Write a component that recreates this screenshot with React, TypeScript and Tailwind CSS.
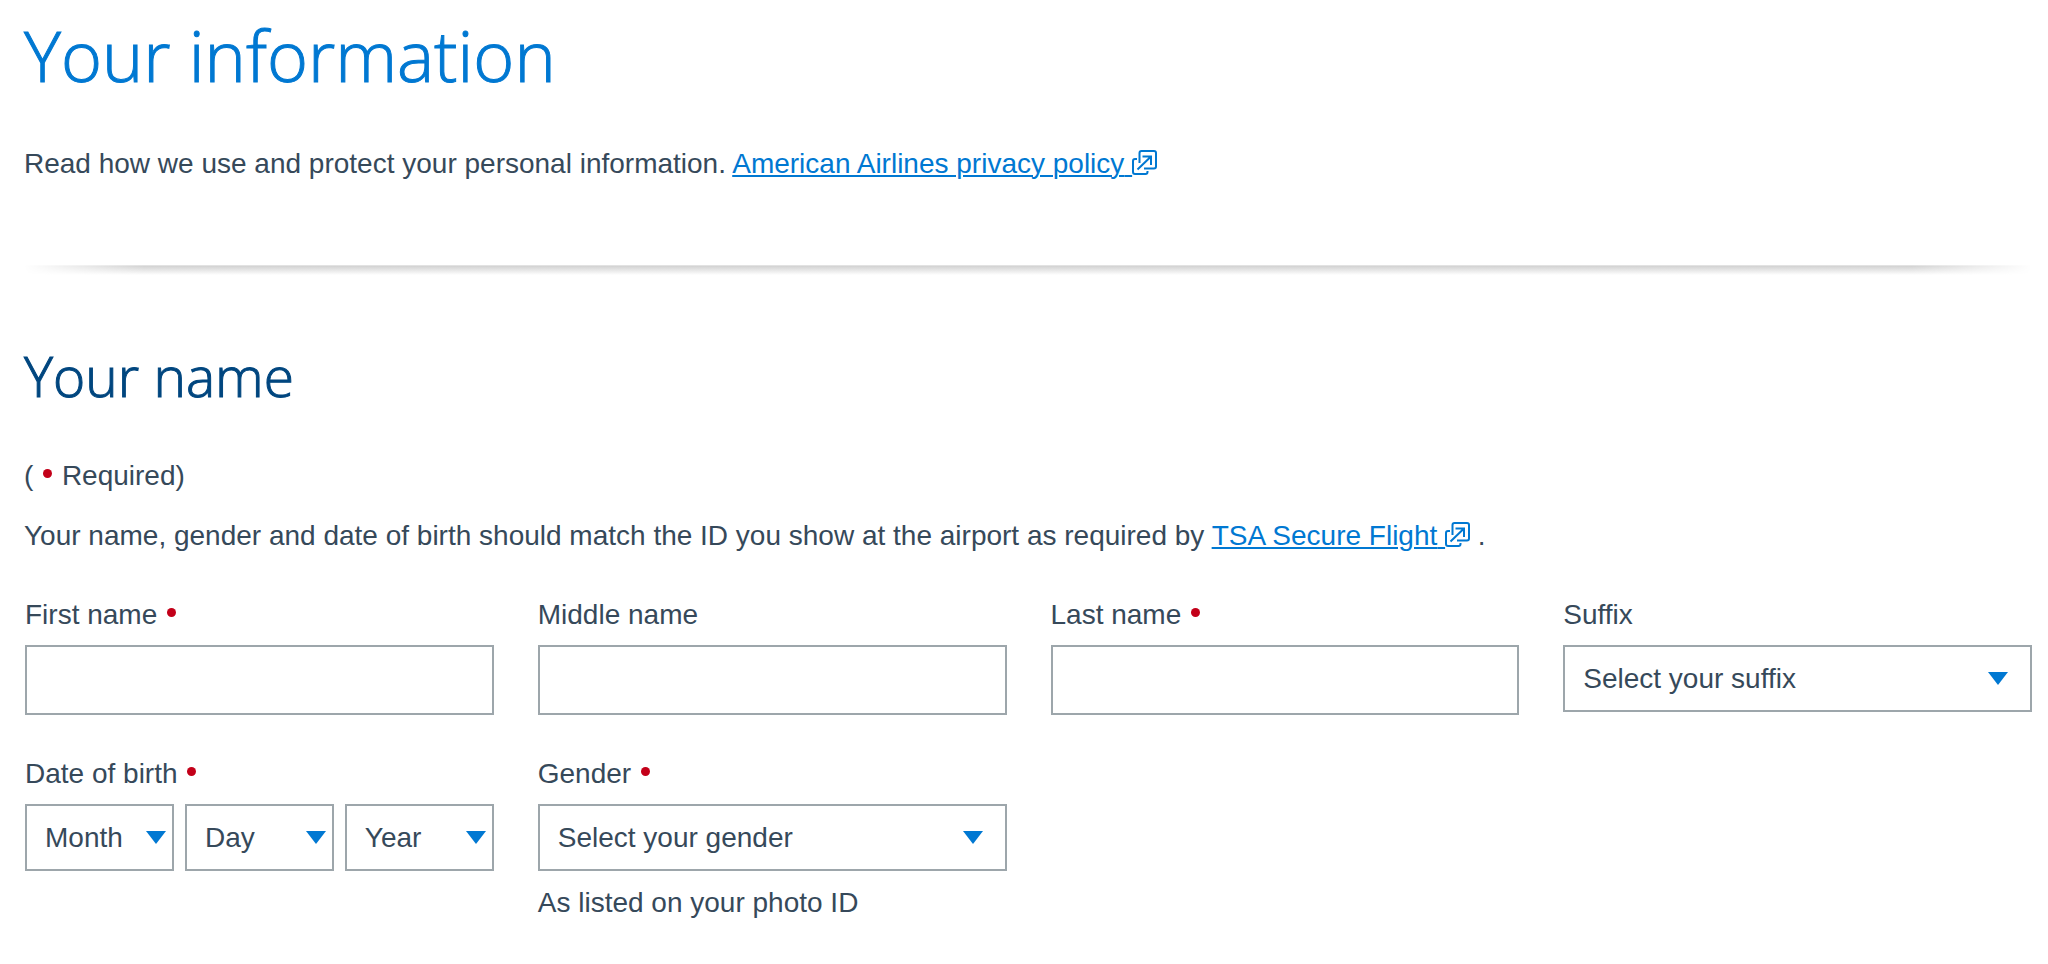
import { useId, type ReactNode } from "react";
import clsx from "clsx";

function RequiredDot() {
  return (
    <span
      role="img"
      aria-label="required"
      className="mr-0.5 mb-[7px] ml-0.5 inline-block size-[9px] rounded-full bg-[#c30019]"
    />
  );
}

function ExternalLink({ children }: { children: ReactNode }) {
  return (
    <a href="#" className="text-[#0078d2] underline decoration-2 underline-offset-2">
      {children}{" "}
      <svg
        viewBox="0 0 25 25"
        className="mb-[-2px] inline-block size-[25px] align-baseline"
        fill="none"
        stroke="currentColor"
        strokeWidth="2"
        aria-hidden="true"
      >
        <path d="M7.5 13V3a2 2 0 0 1 2-2H22a2 2 0 0 1 2 2v13.500a2 2 0 0 1-2 2H12" />
        <path d="M5 9H3a2 2 0 0 0-2 2v11a2 2 0 0 0 2 2h10.500a2 2 0 0 0 2-2v-1" />
        <path d="M5.500 19.500 19 6.500M10.500 6.500H19V15" />
      </svg>
    </a>
  );
}

interface FieldProps {
  label: string;
  required?: boolean;
}

function TextField({ label, required }: FieldProps) {
  const id = useId();
  return (
    <div>
      <label htmlFor={id} className="mb-2.5 block">
        {label} {required && <RequiredDot />}
      </label>
      <input id={id} type="text" className="block h-[70px] w-full border-2 border-[#9da6ab] px-[18px]" />
    </div>
  );
}

interface SelectBoxProps {
  id?: string;
  placeholder: string;
  label?: string;
  compact?: boolean;
}

function SelectBox({ id, placeholder, label, compact }: SelectBoxProps) {
  return (
    <div className="relative">
      <select
        id={id}
        aria-label={label}
        className="block h-[67px] w-full appearance-none border-2 border-[#9da6ab] bg-white pl-[18px]"
      >
        <option>{placeholder}</option>
      </select>
      <svg
        viewBox="0 0 20 13"
        className={clsx(
          "pointer-events-none absolute top-[27px] h-[13px] w-5 fill-[#0078d2]",
          compact ? "right-2" : "right-6"
        )}
        aria-hidden="true"
      >
        <path d="M0 0h20L10 13z" />
      </svg>
    </div>
  );
}

function SelectField({ label, required, placeholder, hint }: FieldProps & { placeholder: string; hint?: string }) {
  const id = useId();
  return (
    <div>
      <label htmlFor={id} className="mb-2.5 block">
        {label} {required && <RequiredDot />}
      </label>
      <SelectBox id={id} placeholder={placeholder} />
      {hint && <p className="mt-3">{hint}</p>}
    </div>
  );
}

export default function App() {
  return (
    <main className="bg-white pt-2 pr-4 pb-10 pl-6 font-['Liberation_Sans',Arial,sans-serif] text-[28px] leading-10 text-[#36495a]">
      <h1 className="font-['Open_Sans',sans-serif] text-[70px] leading-[94px] font-light text-[#0078d2] [-webkit-text-stroke:1px]">
        Your information
      </h1>
      <p className="mt-[42px]">
        Read how we use and protect your personal information.{" "}
        <ExternalLink>American Airlines privacy policy</ExternalLink>
      </p>

      {/* Shadow divider, fading out at both ends */}
      <div className="mt-[81px] h-2.5 border-t border-[#e2e2e2] bg-linear-to-b from-[#d2d2d2] to-white mask-x-from-94% mask-x-to-100%" />

      <h2 className="mt-[61px] font-['Open_Sans',sans-serif] text-[55px] leading-[80px] font-light text-[#00467f] [-webkit-text-stroke:1px]">
        Your name
      </h2>
      <p className="mt-10">
        ( <RequiredDot /> Required)
      </p>
      <p className="mt-5">
        Your name, gender and date of birth should match the ID you show at the airport as required by{" "}
        <ExternalLink>TSA Secure Flight</ExternalLink> .
      </p>

      <form className="mt-[39px] ml-px grid grid-cols-4 gap-x-11 gap-y-[39px]">
        <TextField label="First name" required />
        <TextField label="Middle name" />
        <TextField label="Last name" required />
        <SelectField label="Suffix" placeholder="Select your suffix" />

        <fieldset>
          <legend className="mb-2.5">
            Date of birth <RequiredDot />
          </legend>
          <div className="grid grid-cols-3 gap-[11px]">
            <SelectBox label="Month" placeholder="Month" compact />
            <SelectBox label="Day" placeholder="Day" compact />
            <SelectBox label="Year" placeholder="Year" compact />
          </div>
        </fieldset>
        <SelectField
          label="Gender"
          required
          placeholder="Select your gender"
          hint="As listed on your photo ID"
        />
      </form>
    </main>
  );
}
